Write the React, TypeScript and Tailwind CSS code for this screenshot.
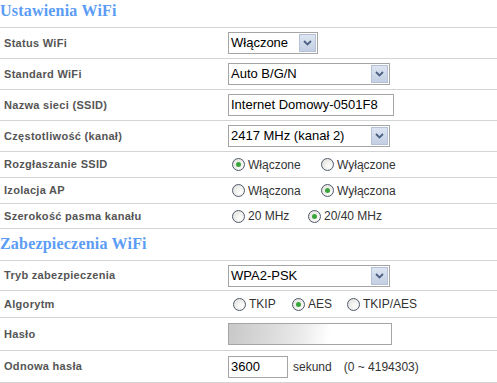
import type { ReactNode } from 'react'

const Row = ({ label, h, children }: { label: string; h: string; children: ReactNode }) => (
  <div className={`grid grid-cols-[228px_1fr] items-center border-b border-[#d4d4d4] ${h}`}>
    <div className="pl-[4px] text-[11px] font-bold tracking-[0.3px] text-[#555]">{label}</div>
    <div className="flex items-center">{children}</div>
  </div>
)

const Chevron = () => (
  <span className="ml-auto mr-[1px] flex h-[18px] w-[17px] items-center justify-center border border-[#b4c1d6] bg-[linear-gradient(#dde5f2,#c3cfe3)]">
    <svg width="9" height="6" viewBox="0 0 9 6">
      <path d="M1 1 L4.5 4.5 L8 1" fill="none" stroke="#4d6185" strokeWidth="1.8" />
    </svg>
  </span>
)

const Select = ({ value, w }: { value: string; w: string }) => (
  <div className={`flex h-[22px] items-center border border-[#a5a5a5] bg-white pl-[2px] text-[13px] text-black ${w}`}>
    <span>{value}</span>
    <Chevron />
  </div>
)

const Radio = ({ checked, label, w }: { checked?: boolean; label: string; w: string }) => (
  <label className={`flex items-center gap-[3px] text-[12px] text-[#333] ${w}`}>
    <span className="flex h-[13px] w-[13px] items-center justify-center rounded-full border border-[#4f5a6b] bg-[radial-gradient(circle_at_65%_65%,#ffffff,#dcdcd6)]">
      {checked && <span className="h-[5px] w-[5px] rounded-full bg-[#3aa43a]" />}
    </span>
    {label}
  </label>
)

const Title = ({ text, h }: { text: string; h: string }) => (
  <div className={`flex items-center border-b border-[#d4d4d4] ${h}`}>
    <h2 className="font-['Liberation_Serif',serif] text-[16px] font-bold tracking-[0.2px] text-[#5b9cf5]">{text}</h2>
  </div>
)

export default function App() {
  return (
    <div className="h-[383px] w-[497px] overflow-hidden bg-white font-['Liberation_Sans',Arial,sans-serif]">
      <Title text="Ustawienia WiFi" h="h-[28px] pb-[6px]" />
      <Row label="Status WiFi" h="h-[31px]">
        <Select value="Włączone" w="w-[90px]" />
      </Row>
      <Row label="Standard WiFi" h="h-[31px]">
        <Select value="Auto B/G/N" w="w-[162px]" />
      </Row>
      <Row label="Nazwa sieci (SSID)" h="h-[31px]">
        <div className="flex h-[22px] w-[166px] items-center border border-[#a5a5a5] pl-[2px] text-[13px] text-black">
          Internet Domowy-0501F8
        </div>
      </Row>
      <Row label="Częstotliwość (kanał)" h="h-[31px]">
        <Select value="2417 MHz (kanał 2)" w="w-[162px]" />
      </Row>
      <Row label="Rozgłaszanie SSID" h="h-[26px]">
        <div className="flex pl-[4px]">
          <Radio checked label="Włączone" w="w-[89px]" />
          <Radio label="Wyłączone" w="w-[90px]" />
        </div>
      </Row>
      <Row label="Izolacja AP" h="h-[26px]">
        <div className="flex pl-[4px]">
          <Radio label="Włączona" w="w-[89px]" />
          <Radio checked label="Wyłączona" w="w-[90px]" />
        </div>
      </Row>
      <Row label="Szerokość pasma kanału" h="h-[25px]">
        <div className="flex pl-[4px]">
          <Radio label="20 MHz" w="w-[76px]" />
          <Radio checked label="20/40 MHz" w="w-[90px]" />
        </div>
      </Row>
      <Title text="Zabezpieczenia WiFi" h="h-[32px] pb-[2px]" />
      <Row label="Tryb zabezpieczenia" h="h-[30px]">
        <Select value="WPA2-PSK" w="w-[162px]" />
      </Row>
      <Row label="Algorytm" h="h-[27px]">
        <div className="flex pl-[5px]">
          <Radio label="TKIP" w="w-[59px]" />
          <Radio checked label="AES" w="w-[55px]" />
          <Radio label="TKIP/AES" w="w-[90px]" />
        </div>
      </Row>
      <Row label="Hasło" h="h-[33px]">
        <div className="h-[22px] w-[164px] border border-[#a5a5a5] bg-[linear-gradient(100deg,#c8c8c8_0%,#dadada_25%,#ebebeb_45%,#f7f7f7_55%,#ffffff_62%)]" />
      </Row>
      <Row label="Odnowa hasła" h="h-[32px]">
        <div className="flex items-center text-[12px] text-[#333]">
          <div className="flex h-[22px] w-[60px] items-center border border-[#a5a5a5] pl-[2px] text-[13px] text-black">3600</div>
          <span className="ml-[5px]">sekund</span>
          <span className="ml-[12px]">(0 ~ 4194303)</span>
        </div>
      </Row>
    </div>
  )
}
